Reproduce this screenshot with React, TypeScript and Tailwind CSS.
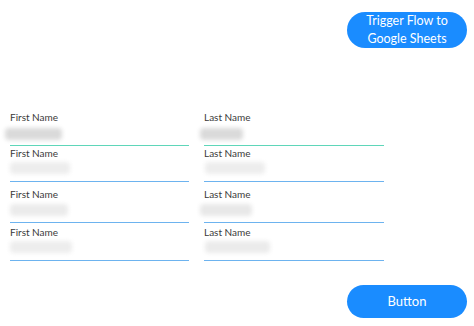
const rows = [
  { gap: "mt-[62px]", line: "border-[#5fd6b9]", left: "ml-[-5px] w-[57px] mt-[4px] bg-[#dadada]", right: "ml-[-4px] w-[43px] mt-[4px] bg-[#dadada]" },
  { gap: "mt-0", line: "border-[#6db3ef]", left: "ml-0 w-[60px] mt-[2px] bg-[#ededed]", right: "ml-[1px] w-[60px] mt-[2px] bg-[#ededed]" },
  { gap: "mt-[5px]", line: "border-[#6db3ef]", left: "ml-0 w-[58px] mt-[3px] bg-[#ebebeb]", right: "ml-[-4px] w-[52px] mt-[3px] bg-[#e8e8e8]" },
  { gap: "mt-[2px]", line: "border-[#6db3ef]", left: "ml-0 w-[62px] mt-[2px] bg-[#ededed]", right: "ml-[1px] w-[65px] mt-[2px] bg-[#ebebeb]" },
]

function Field({ label, line, blur }: { label: string; line: string; blur: string }) {
  return (
    <div className={`flex flex-col h-[36px] border-b ${line}`}>
      <span className="h-[14px] leading-[14px] text-[10px] text-[#3a3a3a]">{label}</span>
      <div className={`h-[12px] blur-[2px] rounded ${blur}`} />
    </div>
  )
}

export default function App() {
  return (
    <div className="w-[474px] h-[326px] bg-white flex flex-col font-['Lato','Liberation_Sans',sans-serif]">
      <div className="flex justify-end pt-[12px] pr-[7px]">
        <button className="w-[120px] h-[36px] rounded-full bg-[#1a8cff] text-white text-[12.5px] leading-[18px]">
          Trigger Flow to
          <br />
          Google Sheets
        </button>
      </div>
      {rows.map((r, i) => (
        <div key={i} className={`grid grid-cols-[179px_180px] gap-x-[15px] pl-[10px] ${r.gap}`}>
          <Field label="First Name" line={r.line} blur={r.left} />
          <Field label="Last Name" line={r.line} blur={r.right} />
        </div>
      ))}
      <div className="flex justify-end pr-[7px] mt-[24px]">
        <button className="w-[120px] h-[33px] rounded-full bg-[#1a8cff] text-white text-[13px]">
          Button
        </button>
      </div>
    </div>
  )
}
